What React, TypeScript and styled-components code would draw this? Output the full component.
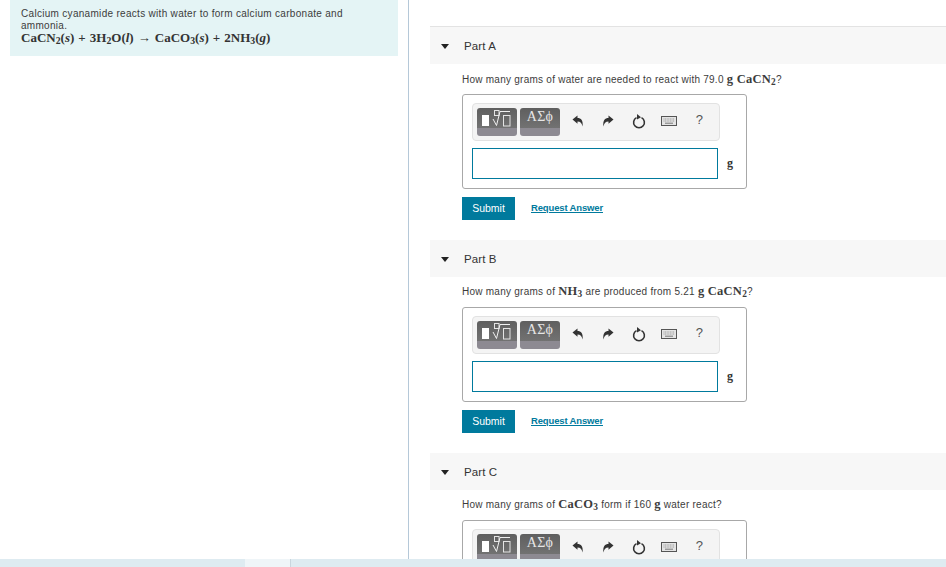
import React from "react";
import styled, { createGlobalStyle } from "styled-components";

const GlobalStyle = createGlobalStyle`
html, body {
  margin: 0;
  padding: 0;
  background: #fff;
  overflow: hidden;
}
* {
  box-sizing: border-box;
}
`

const TemplateIcon = () => (
    <svg width="40" height="20" viewBox="0 0 40 20">
        <rect x="5" y="7" width="7" height="11" fill="#fff" />
        <rect x="17.5" y="2.5" width="4.5" height="5" fill="none" stroke="#e4e4e4" strokeWidth="1" />
        <path d="M16 11 L19.5 17.5 L23 3.5 H33" fill="none" stroke="#f0f0f0" strokeWidth="1" />
        <rect x="26.5" y="7.5" width="6.5" height="10.5" fill="none" stroke="#e4e4e4" strokeWidth="1" />
    </svg>
)

const UndoIcon = () => (
    <svg width="12" height="12" viewBox="0 0 12 12">
        <path d="M0.5 4.5 L5.5 0.5 V3 C9 3 11.5 5.5 10.5 11.5 C9.8 8 8.5 6.5 5.5 6.5 V8.8 Z" fill="#333" />
    </svg>
)

const RedoIcon = () => (
    <svg width="12" height="12" viewBox="0 0 12 12">
        <path d="M11.5 4.5 L6.5 0.5 V3 C3 3 0.5 5.5 1.5 11.5 C2.2 8 3.5 6.5 6.5 6.5 V8.8 Z" fill="#333" />
    </svg>
)

const ResetIcon = () => (
    <svg width="14" height="15" viewBox="0 0 14 15">
        <path d="M4.5 3.6 A5.4 5.4 0 1 0 9.5 3.6" fill="none" stroke="#333" strokeWidth="1.6" />
        <path d="M5 0 L9 3.2 L5 5.6 Z" fill="#333" />
    </svg>
)

const KeyboardIcon = () => (
    <svg width="16" height="10" viewBox="0 0 16 10">
        <rect x="0.5" y="0.5" width="15" height="9" fill="#e4e4e4" stroke="#555" />
        <path d="M2.5 3 H13.5 M2.5 5 H13.5" stroke="#999" strokeWidth="1" strokeDasharray="1 0.6" />
        <path d="M4 7.2 H12" stroke="#777" strokeWidth="1" />
    </svg>
)

const Chem = ({ children }: { children: React.ReactNode }) => <Math>{children}</Math>

const Toolbar = () => (
    <ToolRow>
        <GreyButton><TemplateIcon /></GreyButton>
        <GreyButton><Symbols>ΑΣϕ</Symbols></GreyButton>
        <ToolIcon><UndoIcon /></ToolIcon>
        <ToolIcon><RedoIcon /></ToolIcon>
        <ToolIcon><ResetIcon /></ToolIcon>
        <ToolIcon><KeyboardIcon /></ToolIcon>
        <Help>?</Help>
    </ToolRow>
)

const Answer = () => (
    <>
        <AnswerBox>
            <Toolbar />
            <InputRow>
                <AnswerInput />
                <Unit>g</Unit>
            </InputRow>
        </AnswerBox>
        <Actions>
            <Submit>Submit</Submit>
            <RequestLink href="#">Request Answer</RequestLink>
        </Actions>
    </>
)

const App = () => {
    return (
        <>
            <GlobalStyle />
            <Page>
                <Main>
                    <LeftColumn>
                        <Intro>
                            <IntroText>Calcium cyanamide reacts with water to form calcium carbonate and ammonia.</IntroText>
                            <Equation>
                                CaCN<Sub>2</Sub>(<i>s</i>) + 3H<Sub>2</Sub>O(<i>l</i>) → CaCO<Sub>3</Sub>(<i>s</i>) + 2NH<Sub>3</Sub>(<i>g</i>)
                            </Equation>
                        </Intro>
                    </LeftColumn>
                    <RightColumn>
                        <Part $first>
                            <PartHeader>
                                <Arrow />
                                <PartTitle>Part A</PartTitle>
                            </PartHeader>
                            <Question $top={9}>
                                How many grams of water are needed to react with 79.0 <Chem>g CaCN<Sub>2</Sub></Chem>?
                            </Question>
                            <Answer />
                        </Part>
                        <Part>
                            <PartHeader>
                                <Arrow />
                                <PartTitle>Part B</PartTitle>
                            </PartHeader>
                            <Question>
                                How many grams of <Chem>NH<Sub>3</Sub></Chem> are produced from 5.21 <Chem>g CaCN<Sub>2</Sub></Chem>?
                            </Question>
                            <Answer />
                        </Part>
                        <Part>
                            <PartHeader>
                                <Arrow />
                                <PartTitle>Part C</PartTitle>
                            </PartHeader>
                            <Question>
                                How many grams of <Chem>CaCO<Sub>3</Sub></Chem> form if 160 <Chem>g</Chem> water react?
                            </Question>
                            <AnswerBox>
                                <Toolbar />
                            </AnswerBox>
                        </Part>
                    </RightColumn>
                </Main>
                <BottomBar>
                    <BarSegment $width={245} />
                    <BarGap />
                    <BarSegment $grow />
                </BottomBar>
            </Page>
        </>
    )
}

const Page = styled.div`
display: flex;
flex-direction: column;
width: 946px;
height: 567px;
overflow: hidden;
font-family: "Liberation Sans", Arial, sans-serif;
color: #333;
`
const Main = styled.div`
display: flex;
height: 559px;
overflow: hidden;
`
const LeftColumn = styled.div`
width: 409px;
flex: none;
height: 559px;
padding: 0 10px;
border-right: 1px solid #b5c8d8;
`
const Intro = styled.div`
width: 388px;
height: 56px;
padding: 8px 30px 0 11px;
background: #e4f4f5;
`
const IntroText = styled.div`
font-size: 10px;
line-height: 12px;
letter-spacing: 0.3px;
color: #3c3c3c;
`
const Equation = styled.div`
margin-top: -1px;
font-family: "Liberation Serif", serif;
font-weight: 700;
font-size: 13px;
line-height: 13px;
color: #333;
word-spacing: 0.8px;
white-space: nowrap;
i {
    font-weight: 700;
}
`
const Sub = styled.span`
font-size: 0.75em;
position: relative;
top: 1.5px;
`
const RightColumn = styled.div`
flex: 1;
margin-left: 21px;
padding-top: 26px;
min-width: 0;
`
const Part = styled.section<{ $first?: boolean }>`
height: ${(p) => (p.$first ? "214px" : "213px")};
border-top: ${(p) => (p.$first ? "1px solid #e3e3e3" : "none")};
`
const PartHeader = styled.div`
display: flex;
align-items: center;
height: 37px;
padding-left: 11px;
background: #f7f7f7;
`
const Arrow = styled.span`
width: 0;
height: 0;
border-left: 4.5px solid transparent;
border-right: 4.5px solid transparent;
border-top: 5px solid #222;
margin-top: 1px;
`
const PartTitle = styled.span`
margin-left: 15px;
font-size: 11.5px;
letter-spacing: 0.1px;
color: #333;
`
const Question = styled.div<{ $top?: number }>`
height: 30px;
padding: ${(p) => p.$top ?? 8}px 0 0 32px;
font-size: 10px;
line-height: 13px;
letter-spacing: 0.25px;
color: #3c3c3c;
white-space: nowrap;
`
const Math = styled.span`
font-family: "Liberation Serif", serif;
font-weight: 700;
font-size: 12.5px;
letter-spacing: 0.25px;
`
const AnswerBox = styled.div`
width: 285px;
height: 95px;
margin-left: 32px;
padding: 8px 9px;
border: 1px solid #a8a8a8;
border-radius: 3px;
`
const ToolRow = styled.div`
display: flex;
align-items: flex-start;
width: 248px;
height: 38px;
padding: 4px 0 0 4px;
background: #f4f4f4;
border: 1px solid #e2e2e2;
border-radius: 4px;
`
const GreyButton = styled.div`
display: flex;
justify-content: center;
width: 40px;
height: 28px;
margin-right: 3px;
border-radius: 3px;
background: linear-gradient(#5f5f5f 0, #727272 72%, #8d8a92 72%, #8d8a92 100%);
overflow: hidden;
`
const Symbols = styled.span`
font-family: "Liberation Serif", serif;
font-size: 14px;
line-height: 17px;
letter-spacing: 0.3px;
color: #e6e6e6;
`
const ToolIcon = styled.div`
display: flex;
align-items: center;
justify-content: center;
width: 30.3px;
height: 26px;
`
const Help = styled.div`
width: 30.3px;
height: 24px;
font-size: 13px;
line-height: 24px;
text-align: center;
color: #555;
`
const InputRow = styled.div`
display: flex;
align-items: center;
margin-top: 7px;
`
const AnswerInput = styled.div`
width: 246px;
height: 31px;
background: #fff;
border: 1px solid #007a9d;
`
const Unit = styled.span`
margin-left: 9px;
font-family: "Liberation Serif", serif;
font-weight: 700;
font-size: 12px;
color: #333;
`
const Actions = styled.div`
display: flex;
align-items: center;
margin: 8px 0 0 32px;
`
const Submit = styled.div`
width: 53px;
height: 23px;
font-size: 10.5px;
line-height: 23px;
text-align: center;
background: #007a9d;
color: #fff;
`
const RequestLink = styled.a`
margin-left: 16px;
margin-top: -2px;
font-size: 9.5px;
font-weight: 700;
letter-spacing: -0.15px;
color: #007a9d;
`
const BottomBar = styled.div`
display: flex;
flex: none;
height: 8px;
`
const BarSegment = styled.div<{ $width?: number; $grow?: boolean }>`
width: ${(p) => (p.$width ? `${p.$width}px` : "auto")};
flex: ${(p) => (p.$grow ? 1 : "none")};
background: #deebf1;
`
const BarGap = styled.div`
width: 46px;
background: #eff5f8;
border-right: 1px solid #c9d6de;
`

export default App
